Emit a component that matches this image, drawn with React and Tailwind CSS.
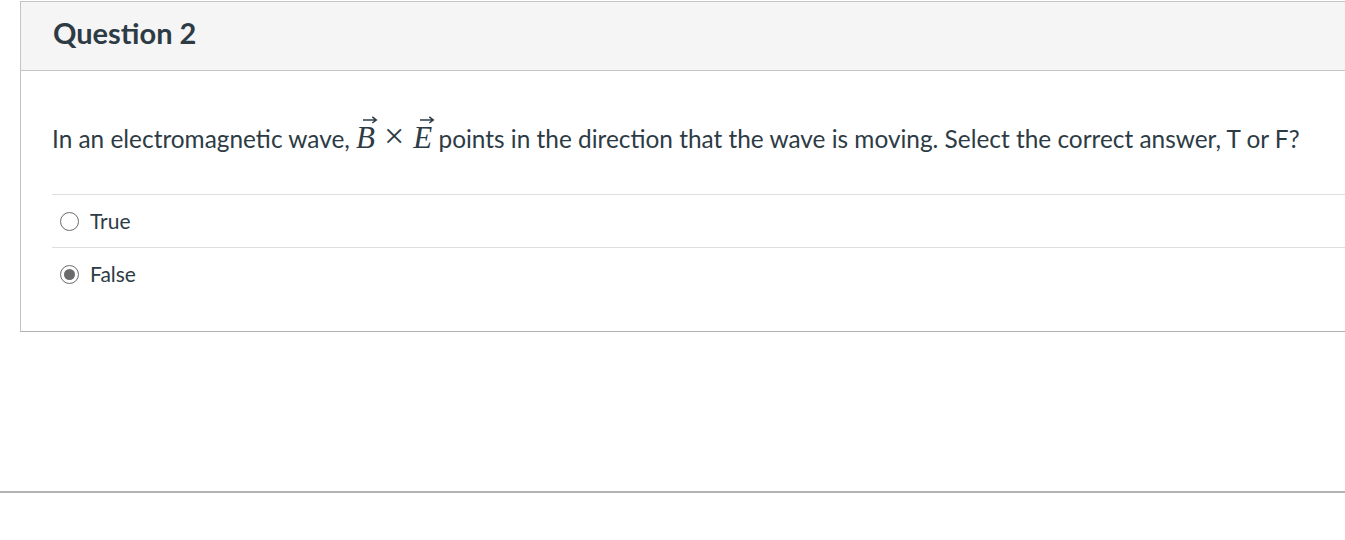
import { useState } from 'react';

function Vec({ letter }) {
  return (
    <span className="relative inline-block" style={{ fontFamily: '"Liberation Serif", serif' }}>
      <span className="italic text-[31px] leading-none">{letter}</span>
      <svg className="absolute left-[6px] top-[-7px]" width="16" height="9" viewBox="0 0 16 9">
        <path d="M1 5 H14 M10.3 1.8 L14.3 5 L10.3 8" stroke="#2d3b45" strokeWidth="1.5" fill="none" />
      </svg>
    </span>
  );
}

function Radio({ checked }) {
  return (
    <span className="w-[19px] h-[19px] rounded-full border-[1.5px] border-[#6b6b6b] bg-white flex items-center justify-center">
      {checked && <span className="w-[11px] h-[11px] rounded-full bg-[#6b6b6b]" />}
    </span>
  );
}

export default function App() {
  const [answer, setAnswer] = useState('false');
  const options = [
    { id: 'true', label: 'True' },
    { id: 'false', label: 'False' }
  ];

  return (
    <div className="w-[1345px] h-[540px] overflow-hidden bg-white text-[#2d3b45]" style={{ fontFamily: 'Lato, "Noto Sans", sans-serif' }}>
      <div className="pt-[1px]">
        <div className="ml-[20px] w-[1340px] border border-[#c4c4c4] border-b-[#b0b0b0]">
          <div className="h-[69px] bg-[#f5f5f5] border-b border-[#c4c4c4] pl-[32px] flex items-center">
            <h2 className="text-[29px] font-bold leading-none pb-[7px]">Question 2</h2>
          </div>
          <div className="pl-[31px] pt-[51px] pb-[31px]">
            <p className="text-[24.4px] leading-[32px] h-[32px] whitespace-nowrap">
              In an electromagnetic wave, <Vec letter="B" />
              <span className="mx-[9px] text-[36px] leading-[0px]" style={{ fontFamily: '"Liberation Serif", serif' }}>×</span>
              <Vec letter="E" /> points in the direction that the wave is moving. Select the correct answer, T or F?
            </p>
            <div className="mt-[40px]">
              {options.map(opt => (
                <div
                  key={opt.id}
                  onClick={() => setAnswer(opt.id)}
                  className="h-[53px] border-t border-[#dedede] flex items-center gap-[11px] pl-[8px]"
                >
                  <Radio checked={answer === opt.id} />
                  <span className="text-[21px]">{opt.label}</span>
                </div>
              ))}
            </div>
          </div>
        </div>
      </div>
      <div className="mt-[159px] h-[2px] bg-[#b3b3b3]" />
    </div>
  );
}
